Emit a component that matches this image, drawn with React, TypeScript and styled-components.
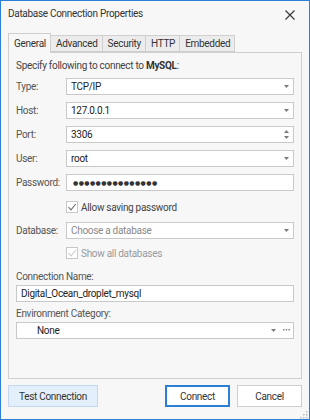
import React from 'react';
import styled, { createGlobalStyle } from 'styled-components';

const GlobalStyle = createGlobalStyle`
  html, body {
    margin: 0;
    padding: 0;
    background: #ffffff;
  }
  body {
    font-family: 'Roboto', 'Noto Sans', sans-serif;
    font-size: 10px;
    letter-spacing: -0.3px;
    color: #333;
  }
`;

const Window = styled.div`
  width: 310px;
  height: 420px;
  box-sizing: border-box;
  border: 1px solid #2b7fd6;
  background: #f7f7f7;
  display: flex;
  flex-direction: column;
  position: relative;
`;

const TitleBar = styled.div`
  height: 32px;
  box-sizing: border-box;
  display: flex;
  align-items: flex-start;
  justify-content: space-between;
  padding: 6px 14px 0 7px;
  line-height: 14px;
  color: #333;
`;

const CloseButton = styled.div`
  width: 10px;
  height: 10px;
  margin-top: 3px;
  display: flex;
`;

const TabStrip = styled.div`
  display: flex;
  align-items: flex-end;
  height: 19px;
  margin: 0 7px;
`;

const Tab = styled.div<{ $active?: boolean; $first?: boolean }>`
  box-sizing: border-box;
  height: ${(p) => (p.$active ? '20px' : '17px')};
  margin-bottom: ${(p) => (p.$active ? '-1px' : '0')};
  padding: 0 4px 0 5px;
  display: flex;
  align-items: center;
  border: 1px solid #cfcfcf;
  border-bottom: ${(p) => (p.$active ? 'none' : '1px solid #cfcfcf')};
  border-left: ${(p) => (p.$first ? '1px solid #cfcfcf' : 'none')};
  background: ${(p) => (p.$active ? '#f7f7f7' : '#ececec')};
  color: #333;
  position: relative;
  z-index: ${(p) => (p.$active ? 1 : 0)};
`;

const Panel = styled.div`
  height: 332px;
  box-sizing: border-box;
  margin: 0 7px;
  border: 1px solid #cfcfcf;
  padding: 5px 7px 0 7px;
  display: flex;
  flex-direction: column;
`;

const Intro = styled.div`
  line-height: 16px;
  color: #444;
  b {
    font-weight: 700;
    color: #333;
  }
`;

const Row = styled.div<{ $mt: number }>`
  display: flex;
  align-items: center;
  height: 17px;
  margin-top: ${(p) => p.$mt}px;
`;

const Label = styled.div`
  width: 50px;
  flex: none;
  color: #555;
  white-space: nowrap;
`;

const FieldBox = styled.div<{ $disabled?: boolean }>`
  flex: 1;
  box-sizing: border-box;
  height: 17px;
  border: 1px solid #c9c9c9;
  background: #ffffff;
  display: flex;
  align-items: center;
  padding: 0 0 0 4px;
  color: ${(p) => (p.$disabled ? '#8a8a8a' : '#222')};
`;

const FieldText = styled.span<{ $indent?: number }>`
  flex: 1;
  padding-left: ${(p) => p.$indent ?? 0}px;
  white-space: nowrap;
  overflow: hidden;
`;

const Dots = styled.span`
  flex: 1;
  padding-left: 2px;
  font-family: 'DejaVu Sans', sans-serif;
  font-size: 6px;
  letter-spacing: 0.4px;
  color: #333;
`;

const ArrowCell = styled.div`
  width: 13px;
  height: 100%;
  display: flex;
  align-items: center;
  justify-content: center;
`;

const SpinCell = styled.div`
  width: 13px;
  height: 100%;
  display: flex;
  flex-direction: column;
  align-items: center;
  justify-content: center;
  gap: 3px;
`;

const CheckRow = styled.div<{ $mt: number }>`
  display: flex;
  align-items: center;
  height: 17px;
  margin-top: ${(p) => p.$mt}px;
  padding-left: 50px;
`;

const CheckBox = styled.div`
  width: 12px;
  height: 12px;
  box-sizing: border-box;
  border: 1px solid #c9c9c9;
  background: #fff;
  display: flex;
  align-items: center;
  justify-content: center;
  margin-right: 3px;
`;

const CheckLabel = styled.span<{ $disabled?: boolean }>`
  color: ${(p) => (p.$disabled ? '#9a9a9a' : '#444')};
`;

const Caption = styled.div<{ $mt: number }>`
  line-height: 16px;
  margin-top: ${(p) => p.$mt}px;
  color: #555;
`;

const FullField = styled(FieldBox)`
  flex: none;
  height: 17px;
`;

const Footer = styled.div`
  height: 34px;
  display: flex;
  align-items: flex-start;
  padding: 6px 7px 0 7px;
  gap: 7px;
`;

const Button = styled.div<{ $variant?: 'test' | 'default' | 'plain' }>`
  box-sizing: border-box;
  height: 22px;
  display: flex;
  align-items: center;
  justify-content: center;
  color: #333;
  background: ${(p) => (p.$variant === 'test' ? '#e3effa' : '#ffffff')};
  border: 1px solid
    ${(p) => (p.$variant === 'test' ? '#c3d8ee' : p.$variant === 'default' ? '#2b7fd6' : '#cfcfcf')};
  box-shadow: ${(p) => (p.$variant === 'default' ? 'inset 0 0 0 1px #2b7fd6' : 'none')};
`;

const Spacer = styled.div`
  flex: 1;
`;

const Grip = styled.div`
  position: absolute;
  right: 1px;
  bottom: 1px;
  width: 8px;
  height: 8px;
`;

const DownArrow = () => (
  <svg width="5" height="3" viewBox="0 0 5 3">
    <path d="M0 0 H5 L2.5 3 Z" fill="#7a7a7a" />
  </svg>
);

const UpArrow = () => (
  <svg width="5" height="3" viewBox="0 0 5 3">
    <path d="M0 3 H5 L2.5 0 Z" fill="#7a7a7a" />
  </svg>
);

const Check: React.FC<{ color: string }> = ({ color }) => (
  <svg width="10" height="10" viewBox="0 0 10 10">
    <path d="M1.5 5.2 L4 7.8 L8.8 2" fill="none" stroke={color} strokeWidth="1.1" />
  </svg>
);

const Combo: React.FC<{ value: string; disabled?: boolean }> = ({ value, disabled }) => (
  <FieldBox $disabled={disabled}>
    <FieldText>{value}</FieldText>
    <ArrowCell>
      <DownArrow />
    </ArrowCell>
  </FieldBox>
);

const App: React.FC = () => {
  return (
    <>
      <GlobalStyle />
      <Window>
        <TitleBar>
          <span>Database Connection Properties</span>
          <CloseButton>
            <svg width="10" height="10" viewBox="0 0 10 10">
              <path d="M0.5 0.5 L9.5 9.5 M9.5 0.5 L0.5 9.5" stroke="#333" strokeWidth="1.1" />
            </svg>
          </CloseButton>
        </TitleBar>

        <TabStrip>
          <Tab $active $first>General</Tab>
          <Tab>Advanced</Tab>
          <Tab>Security</Tab>
          <Tab>HTTP</Tab>
          <Tab>Embedded</Tab>
        </TabStrip>

        <Panel>
          <Intro>
            Specify following to connect to <b>MySQL</b>:
          </Intro>

          <Row $mt={4}>
            <Label>Type:</Label>
            <Combo value="TCP/IP" />
          </Row>
          <Row $mt={7}>
            <Label>Host:</Label>
            <Combo value="127.0.0.1" />
          </Row>
          <Row $mt={7}>
            <Label>Port:</Label>
            <FieldBox>
              <FieldText>3306</FieldText>
              <SpinCell>
                <UpArrow />
                <DownArrow />
              </SpinCell>
            </FieldBox>
          </Row>
          <Row $mt={7}>
            <Label>User:</Label>
            <Combo value="root" />
          </Row>
          <Row $mt={7}>
            <Label>Password:</Label>
            <FieldBox>
              <Dots>●●●●●●●●●●●●●●●</Dots>
            </FieldBox>
          </Row>

          <CheckRow $mt={8}>
            <CheckBox>
              <Check color="#707070" />
            </CheckBox>
            <CheckLabel>Allow saving password</CheckLabel>
          </CheckRow>

          <Row $mt={6}>
            <Label>Database:</Label>
            <Combo value="Choose a database" disabled />
          </Row>

          <CheckRow $mt={6}>
            <CheckBox>
              <Check color="#cfcfcf" />
            </CheckBox>
            <CheckLabel $disabled>Show all databases</CheckLabel>
          </CheckRow>

          <Caption $mt={7}>Connection Name:</Caption>
          <FullField>
            <FieldText>Digital_Ocean_droplet_mysql</FieldText>
          </FullField>

          <Caption $mt={4}>Environment Category:</Caption>
          <FullField>
            <FieldText $indent={16}>None</FieldText>
            <ArrowCell>
              <DownArrow />
            </ArrowCell>
            <ArrowCell>
              <svg width="7" height="2" viewBox="0 0 7 2">
                <rect x="0" y="0" width="1.5" height="1.5" fill="#888" />
                <rect x="2.7" y="0" width="1.5" height="1.5" fill="#888" />
                <rect x="5.4" y="0" width="1.5" height="1.5" fill="#888" />
              </svg>
            </ArrowCell>
          </FullField>
        </Panel>

        <Footer>
          <Button $variant="test" style={{ width: 90 }}>
            Test Connection
          </Button>
          <Spacer />
          <Button $variant="default" style={{ width: 65 }}>
            Connect
          </Button>
          <Button $variant="plain" style={{ width: 65 }}>
            Cancel
          </Button>
        </Footer>

        <Grip>
          <svg width="8" height="8" viewBox="0 0 8 8">
            <rect x="6" y="0" width="1.5" height="1.5" fill="#bbb" />
            <rect x="3" y="3" width="1.5" height="1.5" fill="#bbb" />
            <rect x="6" y="3" width="1.5" height="1.5" fill="#bbb" />
            <rect x="0" y="6" width="1.5" height="1.5" fill="#bbb" />
            <rect x="3" y="6" width="1.5" height="1.5" fill="#bbb" />
            <rect x="6" y="6" width="1.5" height="1.5" fill="#bbb" />
          </svg>
        </Grip>
      </Window>
    </>
  );
};

export default App;
